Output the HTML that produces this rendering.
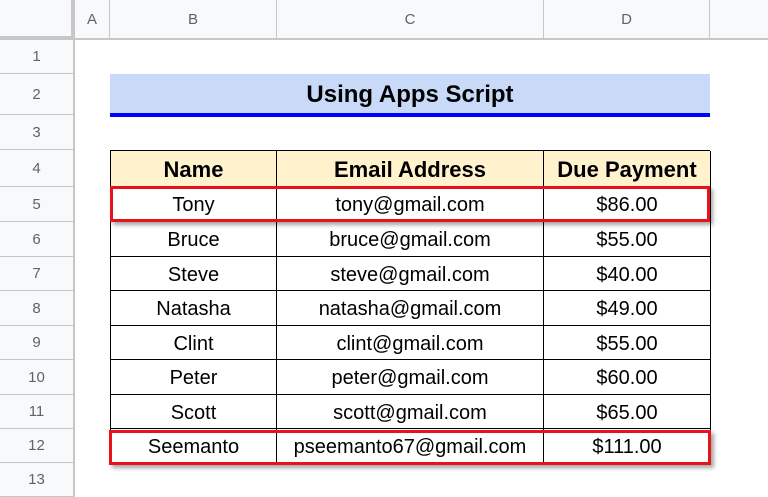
<!DOCTYPE html>
<html><head><style>
*{margin:0;padding:0;box-sizing:border-box}
body{width:768px;height:497px;overflow:hidden;background:#fff;font-family:"Liberation Sans",Arial,sans-serif;position:relative}
.ch{position:absolute;top:0;height:40px;background:#f8f9fa;border-right:1px solid #c7c7c7;border-bottom:2px solid #c7c7c7;color:#5f6368;font-size:15px;text-align:center;line-height:40px}
.rh{position:absolute;left:0;width:75px;background:#f8f9fa;border-right:2px solid #c7c7c7;border-bottom:1px solid #c7c7c7;color:#5f6368;font-size:15px;text-align:center}
.c{position:absolute;text-align:center;font-size:20px;color:#000;border-right:1px solid #000;border-bottom:1px solid #000;display:flex;align-items:center;justify-content:center;padding-top:3px}
.red{position:absolute;border:3px solid #e8121b;box-shadow:3px 3px 4px rgba(0,0,0,.35)}
</style></head><body>
<div class="ch" style="left:0;width:75px;border-right:4px solid #c7c7c7;border-bottom:4px solid #c7c7c7;background:#f8f9fa"></div>
<div class="ch" style="left:75px;width:35px">A</div>
<div class="ch" style="left:110px;width:167px">B</div>
<div class="ch" style="left:277px;width:267px">C</div>
<div class="ch" style="left:544px;width:166px">D</div>
<div class="ch" style="left:710px;width:58px;border-right:none"></div>

<div class="rh" style="top:40px;height:34px;line-height:34px">1</div>
<div class="rh" style="top:74px;height:41px;line-height:41px">2</div>
<div class="rh" style="top:115px;height:35px;line-height:35px">3</div>
<div class="rh" style="top:150px;height:37px;line-height:37px">4</div>
<div class="rh" style="top:187px;height:35px;line-height:35px">5</div>
<div class="rh" style="top:222px;height:35px;line-height:35px">6</div>
<div class="rh" style="top:257px;height:34px;line-height:34px">7</div>
<div class="rh" style="top:291px;height:35px;line-height:35px">8</div>
<div class="rh" style="top:326px;height:34px;line-height:34px">9</div>
<div class="rh" style="top:360px;height:35px;line-height:35px">10</div>
<div class="rh" style="top:395px;height:34px;line-height:34px">11</div>
<div class="rh" style="top:429px;height:34px;line-height:34px">12</div>
<div class="rh" style="top:463px;height:34px;line-height:34px">13</div>

<div style="position:absolute;left:110px;top:74px;width:600px;height:39px;background:#c9daf8;font-weight:bold;font-size:24px;text-align:center;line-height:42px">Using Apps Script</div>
<div style="position:absolute;left:110px;top:113px;width:600px;height:4px;background:#0000ff"></div>

<div style="position:absolute;left:110px;top:150px;width:600px;height:314px;border-left:1px solid #000;border-top:1px solid #000"></div>
<div id="t"></div>
<script>
var rows=[["Name","Email Address","Due Payment"],["Tony","tony@gmail.com","$86.00"],["Bruce","bruce@gmail.com","$55.00"],["Steve","steve@gmail.com","$40.00"],["Natasha","natasha@gmail.com","$49.00"],["Clint","clint@gmail.com","$55.00"],["Peter","peter@gmail.com","$60.00"],["Scott","scott@gmail.com","$65.00"],["Seemanto","pseemanto67@gmail.com","$111.00"]];
var ys=[151,187,222,257,291,326,360,395,429,464];
var xs=[111,277,544,711];
var h="";
for(var r=0;r<rows.length;r++)for(var c=0;c<3;c++){
h+='<div class="c" style="left:'+xs[c]+'px;top:'+ys[r]+'px;width:'+(xs[c+1]-xs[c])+'px;height:'+(ys[r+1]-ys[r])+'px;'+(r==0?'background:#fff2cc;font-weight:bold;font-size:22px;':'')+'">'+rows[r][c]+'</div>';}
document.getElementById('t').innerHTML=h;
</script>
<div class="red" style="left:110px;top:186px;width:600px;height:36px"></div>
<div class="red" style="left:109px;top:430px;width:602px;height:35px"></div>
</body></html>
